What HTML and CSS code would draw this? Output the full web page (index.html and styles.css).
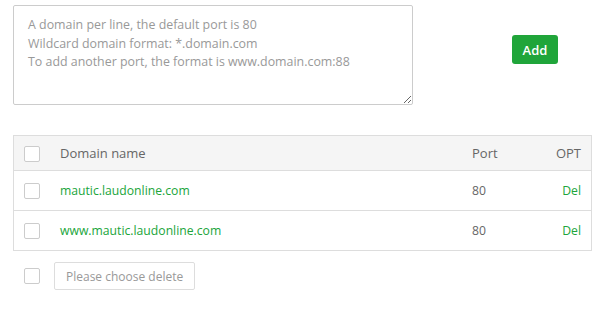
FILE: index.html
```html
<!DOCTYPE html>
<html lang="en">

<head>
    <meta charset="UTF-8">
    <title>Domain manager</title>
    <link rel="stylesheet" href="styles.css">
</head>

<body>

    <div class="panel">

        <!-- Add domains -->
        <div class="add-row">
            <textarea class="domain-input" placeholder="A domain per line, the default port is 80&#10;Wildcard domain format: *.domain.com&#10;To add another port, the format is www.domain.com:88"></textarea>
            <button class="btn-add">Add</button>
        </div>

        <!-- Domain list -->
        <table class="domain-table">
            <thead>
                <tr>
                    <th class="col-check"><span class="check"></span></th>
                    <th>Domain name</th>
                    <th class="col-port">Port</th>
                    <th class="col-opt">OPT</th>
                </tr>
            </thead>
            <tbody>
                <tr>
                    <td class="col-check"><span class="check"></span></td>
                    <td class="link">mautic.laudonline.com</td>
                    <td class="col-port">80</td>
                    <td class="col-opt link">Del</td>
                </tr>
                <tr>
                    <td class="col-check"><span class="check"></span></td>
                    <td class="link">www.mautic.laudonline.com</td>
                    <td class="col-port">80</td>
                    <td class="col-opt link">Del</td>
                </tr>
            </tbody>
        </table>

        <div class="batch-row">
            <span class="check"></span>
            <button class="btn-batch">Please choose delete</button>
        </div>

    </div>

</body>

</html>
```

FILE: styles.css
```css
body {
    margin: 0;
    padding: 0;
    background-color: #ffffff;
    font-family: "Open Sans", "Noto Sans", Arial, sans-serif;
    font-size: 12.2px;
    color: #666666;
}

.panel {
    padding: 5px 9px 0 13px;
}

.add-row {
    display: flex;
    align-items: flex-start;
}

.domain-input {
    box-sizing: border-box;
    width: 400px;
    height: 100px;
    margin: 0;
    padding: 10px 14px;
    border: 1px solid #cccccc;
    border-radius: 2px;
    font-family: inherit;
    font-size: 12.4px;
    line-height: 18.5px;
    color: #555555;
    resize: vertical;
    outline: none;
}

.domain-input::placeholder {
    color: #999999;
}

.btn-add {
    margin-top: 30px;
    margin-left: 99px;
    width: 46px;
    height: 29px;
    padding: 0;
    border: none;
    border-radius: 3px;
    background-color: #20a53a;
    color: #ffffff;
    font-family: inherit;
    font-size: 13px;
    font-weight: 600;
}

.domain-table {
    width: 579px;
    margin-top: 30px;
    border-collapse: collapse;
    border: 1px solid #dddddd;
}

.domain-table th,
.domain-table td {
    padding: 0 10px;
    border-bottom: 1px solid #dddddd;
    text-align: left;
    font-weight: normal;
    white-space: nowrap;
}

.domain-table th {
    height: 34px;
    background-color: #f5f5f5;
    color: #666666;
    font-size: 13px;
}

.domain-table td {
    height: 39px;
}

.col-check {
    width: 16px;
    padding-right: 10px !important;
}

.col-check .check {
    vertical-align: middle;
}

.col-port {
    width: 49px;
}

.col-opt {
    width: 40px;
    text-align: right !important;
}

.link {
    color: #20a53a;
}

.check {
    display: inline-block;
    box-sizing: border-box;
    width: 16px;
    height: 16px;
    border: 1px solid #cccccc;
    border-radius: 2px;
    background-color: #ffffff;
}

.batch-row {
    display: flex;
    align-items: center;
    gap: 14px;
    margin-top: 11px;
    padding-left: 11px;
}

.btn-batch {
    height: 28px;
    padding: 0 11px;
    border: 1px solid #dddddd;
    border-radius: 2px;
    background-color: #ffffff;
    color: #999999;
    font-family: inherit;
    font-size: 12px;
}
```
